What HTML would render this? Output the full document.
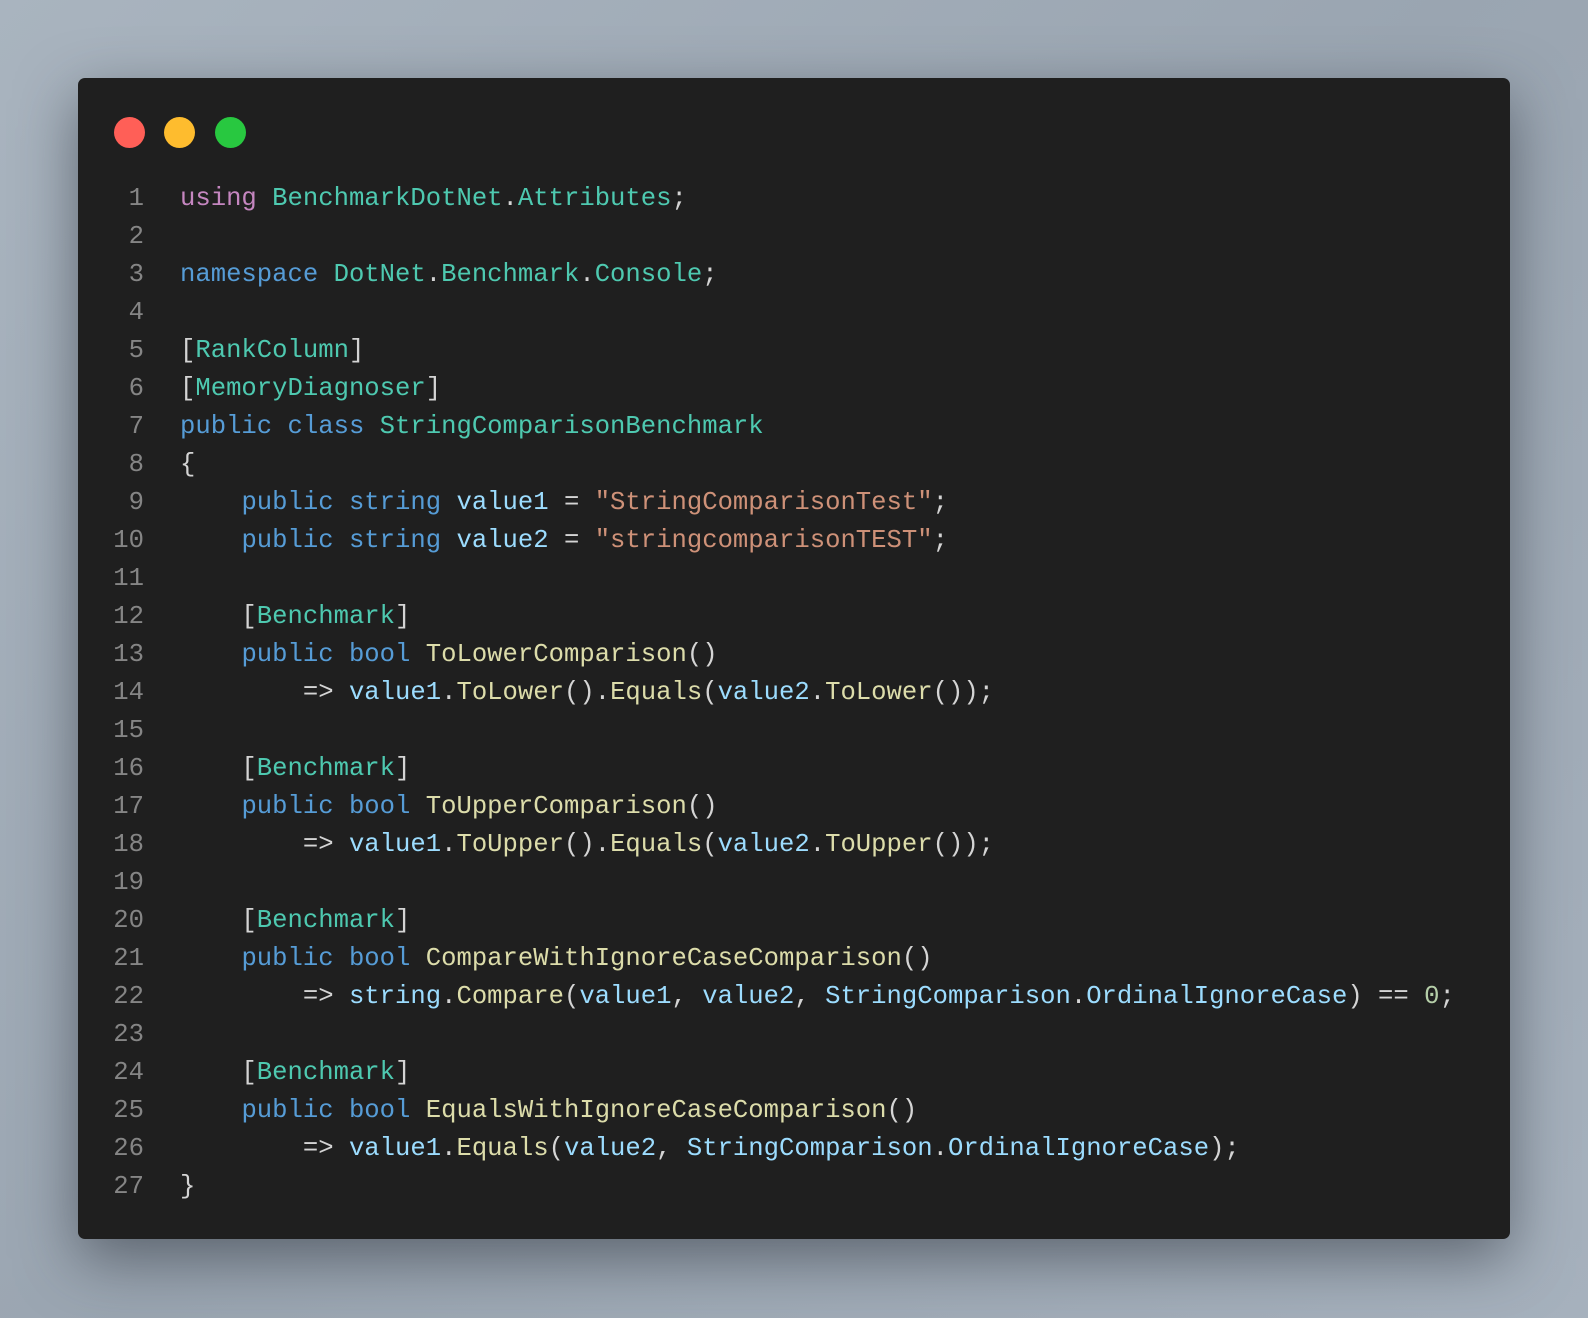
<!DOCTYPE html>
<html><head><meta charset="utf-8"><style>
html,body{margin:0;padding:0;}
body{width:1588px;height:1318px;background:linear-gradient(135deg,#a9b4bf 0%,#9aa5b1 50%,#a6b1bd 100%);position:relative;overflow:hidden;}
.win{position:absolute;left:78px;top:78px;width:1432px;height:1161px;background:#1f1f1f;border-radius:7px;box-shadow:0 20px 60px rgba(40,45,55,0.55);}
.dot{position:absolute;top:117px;width:31px;height:31px;border-radius:50%;}
.code{position:absolute;left:0;top:179.5px;font-family:"Liberation Mono",monospace;font-size:25.6px;line-height:38px;color:#d4d4d4;white-space:pre;}
.ln{position:absolute;left:96px;width:48px;text-align:right;top:179.5px;font-family:"Liberation Mono",monospace;font-size:25.6px;line-height:38px;color:#858585;white-space:pre;}
.k{color:#c586c0}.b{color:#569cd6}.t{color:#4ec9b0}.v{color:#9cdcfe}.m{color:#dcdcaa}.s{color:#ce9178}.n{color:#b5cea8}
</style></head><body>
<div class="win"></div>
<div class="dot" style="left:114px;background:#ff5f57"></div>
<div class="dot" style="left:164px;background:#febc2e"></div>
<div class="dot" style="left:215px;background:#28c840"></div>
<div class="ln">1
2
3
4
5
6
7
8
9
10
11
12
13
14
15
16
17
18
19
20
21
22
23
24
25
26
27</div>
<div class="code" style="left:180px"><span class="k">using</span> <span class="t">BenchmarkDotNet</span>.<span class="t">Attributes</span>;

<span class="b">namespace</span> <span class="t">DotNet</span>.<span class="t">Benchmark</span>.<span class="t">Console</span>;

[<span class="t">RankColumn</span>]
[<span class="t">MemoryDiagnoser</span>]
<span class="b">public</span> <span class="b">class</span> <span class="t">StringComparisonBenchmark</span>
{
    <span class="b">public</span> <span class="b">string</span> <span class="v">value1</span> = <span class="s">"StringComparisonTest"</span>;
    <span class="b">public</span> <span class="b">string</span> <span class="v">value2</span> = <span class="s">"stringcomparisonTEST"</span>;

    [<span class="t">Benchmark</span>]
    <span class="b">public</span> <span class="b">bool</span> <span class="m">ToLowerComparison</span>()
        =&gt; <span class="v">value1</span>.<span class="m">ToLower</span>().<span class="m">Equals</span>(<span class="v">value2</span>.<span class="m">ToLower</span>());

    [<span class="t">Benchmark</span>]
    <span class="b">public</span> <span class="b">bool</span> <span class="m">ToUpperComparison</span>()
        =&gt; <span class="v">value1</span>.<span class="m">ToUpper</span>().<span class="m">Equals</span>(<span class="v">value2</span>.<span class="m">ToUpper</span>());

    [<span class="t">Benchmark</span>]
    <span class="b">public</span> <span class="b">bool</span> <span class="m">CompareWithIgnoreCaseComparison</span>()
        =&gt; <span class="v">string</span>.<span class="m">Compare</span>(<span class="v">value1</span>, <span class="v">value2</span>, <span class="v">StringComparison</span>.<span class="v">OrdinalIgnoreCase</span>) == <span class="n">0</span>;

    [<span class="t">Benchmark</span>]
    <span class="b">public</span> <span class="b">bool</span> <span class="m">EqualsWithIgnoreCaseComparison</span>()
        =&gt; <span class="v">value1</span>.<span class="m">Equals</span>(<span class="v">value2</span>, <span class="v">StringComparison</span>.<span class="v">OrdinalIgnoreCase</span>);
}</div>
</body></html>
